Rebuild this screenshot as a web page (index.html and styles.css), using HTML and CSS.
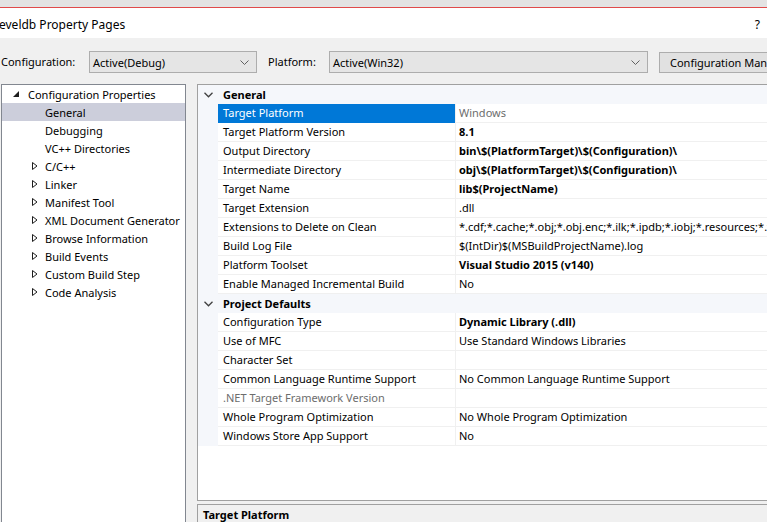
FILE: index.html
```html
<!DOCTYPE html>
<html>
<head>
<meta charset="utf-8">
<link rel="stylesheet" href="styles.css">
</head>
<body>
<div class="window">
  <div class="chrome"></div>
  <div class="titlebar">
    <span class="title">eveldb Property Pages</span>
    <span class="help">?</span>
  </div>
  <div class="toolbar">
    <span class="label label-cfg">Configuration:</span>
    <div class="combo combo-cfg">
      <span class="combo-text">Active(Debug)</span>
      <svg class="combo-arrow" width="9" height="5" viewBox="0 0 9 5"><path d="M0.5 0.5 L4.5 4.5 L8.5 0.5" fill="none" stroke="#606060" stroke-width="1"/></svg>
    </div>
    <span class="label label-plat">Platform:</span>
    <div class="combo combo-plat">
      <span class="combo-text">Active(Win32)</span>
      <svg class="combo-arrow" width="9" height="5" viewBox="0 0 9 5"><path d="M0.5 0.5 L4.5 4.5 L8.5 0.5" fill="none" stroke="#606060" stroke-width="1"/></svg>
    </div>
    <div class="button">Configuration Manager...</div>
  </div>
  <div class="main">
    <div class="tree">
      <div class="node root">
        <svg class="tw" width="8" height="8" viewBox="0 0 8 8"><polygon points="7,1 7,7 1,7" fill="#1e1e1e"/></svg>
        <span>Configuration Properties</span>
      </div>
      <div class="node child selected"><span>General</span></div>
      <div class="node child"><span>Debugging</span></div>
      <div class="node child"><span>VC++ Directories</span></div>
      <div class="node child exp"><svg class="tw" width="8" height="10" viewBox="0 0 8 10"><polygon points="1.5,1.5 6,5 1.5,8.5" fill="none" stroke="#1e1e1e" stroke-width="1"/></svg><span>C/C++</span></div>
      <div class="node child exp"><svg class="tw" width="8" height="10" viewBox="0 0 8 10"><polygon points="1.5,1.5 6,5 1.5,8.5" fill="none" stroke="#1e1e1e" stroke-width="1"/></svg><span>Linker</span></div>
      <div class="node child exp"><svg class="tw" width="8" height="10" viewBox="0 0 8 10"><polygon points="1.5,1.5 6,5 1.5,8.5" fill="none" stroke="#1e1e1e" stroke-width="1"/></svg><span>Manifest Tool</span></div>
      <div class="node child exp"><svg class="tw" width="8" height="10" viewBox="0 0 8 10"><polygon points="1.5,1.5 6,5 1.5,8.5" fill="none" stroke="#1e1e1e" stroke-width="1"/></svg><span>XML Document Generator</span></div>
      <div class="node child exp"><svg class="tw" width="8" height="10" viewBox="0 0 8 10"><polygon points="1.5,1.5 6,5 1.5,8.5" fill="none" stroke="#1e1e1e" stroke-width="1"/></svg><span>Browse Information</span></div>
      <div class="node child exp"><svg class="tw" width="8" height="10" viewBox="0 0 8 10"><polygon points="1.5,1.5 6,5 1.5,8.5" fill="none" stroke="#1e1e1e" stroke-width="1"/></svg><span>Build Events</span></div>
      <div class="node child exp"><svg class="tw" width="8" height="10" viewBox="0 0 8 10"><polygon points="1.5,1.5 6,5 1.5,8.5" fill="none" stroke="#1e1e1e" stroke-width="1"/></svg><span>Custom Build Step</span></div>
      <div class="node child exp"><svg class="tw" width="8" height="10" viewBox="0 0 8 10"><polygon points="1.5,1.5 6,5 1.5,8.5" fill="none" stroke="#1e1e1e" stroke-width="1"/></svg><span>Code Analysis</span></div>
    </div>
    <div class="right">
      <div class="grid">
        <div class="cat">
          <div class="gut"><svg width="9" height="6" viewBox="0 0 9 6"><path d="M0.5 0.8 L4.5 4.8 L8.5 0.8" fill="none" stroke="#404040" stroke-width="1.3"/></svg></div>
          <div class="cat-name">General</div>
        </div>
        <div class="row sel"><div class="gut"></div><div class="name">Target Platform</div><div class="val dis">Windows</div></div>
        <div class="row"><div class="gut"></div><div class="name">Target Platform Version</div><div class="val b">8.1</div></div>
        <div class="row"><div class="gut"></div><div class="name">Output Directory</div><div class="val b">bin\$(PlatformTarget)\$(Configuration)\</div></div>
        <div class="row"><div class="gut"></div><div class="name">Intermediate Directory</div><div class="val b">obj\$(PlatformTarget)\$(Configuration)\</div></div>
        <div class="row"><div class="gut"></div><div class="name">Target Name</div><div class="val b">lib$(ProjectName)</div></div>
        <div class="row"><div class="gut"></div><div class="name">Target Extension</div><div class="val">.dll</div></div>
        <div class="row"><div class="gut"></div><div class="name">Extensions to Delete on Clean</div><div class="val">*.cdf;*.cache;*.obj;*.obj.enc;*.ilk;*.ipdb;*.iobj;*.resources;*.tlb;*.tli;*.tlh;*.tmp;*.rsp;*.pgc;*.pgd</div></div>
        <div class="row"><div class="gut"></div><div class="name">Build Log File</div><div class="val">$(IntDir)$(MSBuildProjectName).log</div></div>
        <div class="row"><div class="gut"></div><div class="name">Platform Toolset</div><div class="val b">Visual Studio 2015 (v140)</div></div>
        <div class="row"><div class="gut"></div><div class="name">Enable Managed Incremental Build</div><div class="val">No</div></div>
        <div class="cat">
          <div class="gut"><svg width="9" height="6" viewBox="0 0 9 6"><path d="M0.5 0.8 L4.5 4.8 L8.5 0.8" fill="none" stroke="#404040" stroke-width="1.3"/></svg></div>
          <div class="cat-name">Project Defaults</div>
        </div>
        <div class="row"><div class="gut"></div><div class="name">Configuration Type</div><div class="val b">Dynamic Library (.dll)</div></div>
        <div class="row"><div class="gut"></div><div class="name">Use of MFC</div><div class="val">Use Standard Windows Libraries</div></div>
        <div class="row"><div class="gut"></div><div class="name">Character Set</div><div class="val"></div></div>
        <div class="row"><div class="gut"></div><div class="name">Common Language Runtime Support</div><div class="val">No Common Language Runtime Support</div></div>
        <div class="row"><div class="gut"></div><div class="name dis">.NET Target Framework Version</div><div class="val"></div></div>
        <div class="row"><div class="gut"></div><div class="name">Whole Program Optimization</div><div class="val">No Whole Program Optimization</div></div>
        <div class="row"><div class="gut"></div><div class="name">Windows Store App Support</div><div class="val">No</div></div>
      </div>
      <div class="desc">Target Platform</div>
    </div>
  </div>
</div>
</body>
</html>
```
FILE: styles.css
```css
* { box-sizing: border-box; }
html, body {
  margin: 0;
  padding: 0;
  width: 767px;
  height: 522px;
  overflow: hidden;
  background: #f0f0f0;
  font-family: "Noto Sans", "Liberation Sans", sans-serif;
  font-size: 11px;
  color: #000;
}
.window {
  width: 767px;
  height: 522px;
  display: flex;
  flex-direction: column;
  overflow: hidden;
}
.chrome {
  height: 8px;
  background: #e3e3e3;
  border-bottom: 1px solid #e04a4a;
  flex: none;
}
.titlebar {
  height: 30px;
  flex: none;
  background: #fff;
  display: flex;
  align-items: center;
  justify-content: space-between;
  padding: 2px 7px 0 0;
  font-size: 12px;
}
.title { margin-left: -1px; }
.help { font-size: 12px; }
.toolbar {
  flex: none;
  height: 46px;
  display: flex;
  align-items: flex-start;
  padding-top: 13px;
  white-space: nowrap;
}
.label {
  height: 22px;
  line-height: 21px;
  flex: none;
}
.label-cfg { width: 89px; padding-left: 1px; }
.label-plat { width: 61px; margin-left: 11px; }
.combo {
  flex: none;
  height: 22px;
  background: #e5e5e5;
  border: 1px solid #adadad;
  display: flex;
  align-items: center;
  justify-content: space-between;
  padding: 0 7px 0 3px;
}
.combo-cfg { width: 168px; }
.combo-plat { width: 319px; }
.combo-arrow { margin-top: 1px; }
.button {
  flex: none;
  margin-left: 11px;
  margin-top: 1px;
  height: 21px;
  width: 140px;
  background: #e1e1e1;
  border: 1px solid #adadad;
  line-height: 19px;
  padding-left: 10px;
}
.main {
  flex: 1;
  display: flex;
  min-height: 0;
}
.tree {
  flex: none;
  width: 185px;
  margin-left: 1px;
  height: 460px;
  background: #fff;
  border: 1px solid #828790;
  padding-top: 0;
}
.node {
  height: 18px;
  display: flex;
  align-items: center;
  white-space: nowrap;
}
.node.root { padding-left: 10px; }
.node.root .tw { margin-right: 8px; margin-top: -1px; }
.node.child { padding-left: 43px; }
.node.exp { padding-left: 29px; }
.node.exp .tw { margin-right: 6px; }
.node.selected { background: #cccedb; }
.right {
  flex: none;
  width: 572px;
  margin-left: 11px;
  display: flex;
  flex-direction: column;
}
.grid {
  height: 417px;
  background: #fff;
  border: 1px solid #a0a0a0;
  flex: none;
}
.cat, .row {
  height: 19px;
  display: flex;
  white-space: nowrap;
}
.cat { background: #f5f7fb; }
.gut {
  width: 20px;
  flex: none;
  background: #f5f7fb;
  display: flex;
  align-items: center;
  justify-content: center;
}
.cat .gut svg { margin-left: 1px; }
.cat-name {
  font-weight: bold;
  line-height: 19px;
  padding-left: 5px;
}
.name {
  width: 237px;
  flex: none;
  padding-left: 5px;
  line-height: 18px;
  border-bottom: 1px solid #f0f0f0;
  overflow: hidden;
}
.val {
  flex: 1;
  min-width: 0;
  border-left: 1px solid #f0f0f0;
  border-bottom: 1px solid #f0f0f0;
  padding-left: 3px;
  line-height: 18px;
  overflow: hidden;
}
.b { font-weight: bold; }
.dis { color: #6d6d6d; }
.row.sel .name {
  background: #0078d7;
  color: #fff;
  border-bottom-color: #0078d7;
}
.desc {
  margin-top: 3px;
  height: 30px;
  border: 1px solid #a0a0a0;
  border-right: none;
  border-bottom: none;
  font-weight: bold;
  padding-left: 5px;
  line-height: 19px;
  padding-top: 0;
}
```
